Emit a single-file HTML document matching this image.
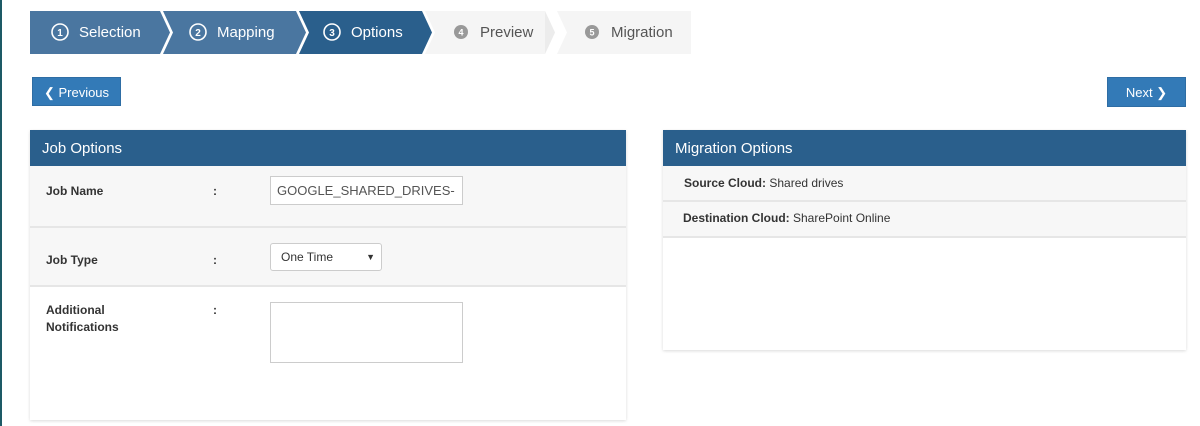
<!DOCTYPE html>
<html><head><style>
body{margin:0;width:1200px;height:426px;background:#fff;font-family:"Liberation Sans",sans-serif;position:relative;overflow:hidden}
.edge{position:absolute;left:0;top:0;width:2px;height:426px;background:#1d5a66}
.abs{position:absolute}
.btn{position:absolute;background:#337ab7;border:1px solid #2e6da4;color:#fff;font-size:13px;line-height:29px;text-align:center;box-sizing:border-box}
.panel{position:absolute;background:#fff;box-shadow:0 1px 3px rgba(0,0,0,.15)}
.ph{background:#2a5f8c;color:#fff;font-size:15px;height:36px;line-height:38px;padding-left:12px}
.row{background:#f7f7f7;border-bottom:2px solid #e6e6e6;position:relative;font-size:12px;color:#333}
.lbl{position:absolute;left:16px;font-weight:bold;font-size:12px;color:#333;line-height:17px}
.col{position:absolute;left:183px;font-weight:bold}
.inp{position:absolute;left:240px;background:#fff;border:1px solid #ccc;box-sizing:border-box}
</style></head><body>
<div class="edge"></div>
<svg class="abs" style="left:0;top:0" width="720" height="60">
<polygon points="30,11 160,11 170,32.5 160,54 30,54" fill="#4a76a0"/>
<polygon points="163,11 296,11 306,32.5 296,54 163,54 173,32.5" fill="#4a76a0"/>
<polygon points="299,11 422,11 432,32.5 422,54 299,54 309,32.5" fill="#2a5f8c"/>
<polygon points="425,11 545,11 555,32.5 545,54 425,54 435,32.5" fill="#f5f5f5"/>
<polygon points="545,11 555,32.5 545,54" fill="#ececec"/>
<polygon points="557,11 691,11 691,54 557,54 567,32.5" fill="#f5f5f5"/>
<g fill="none" stroke="#fff" stroke-width="1.6"><circle cx="60" cy="32" r="8"/><circle cx="198" cy="32" r="8"/><circle cx="332" cy="32" r="8"/></g>
<circle cx="461" cy="32" r="7" fill="#999"/><circle cx="592" cy="32" r="7" fill="#999"/>
<g font-family="Liberation Sans" font-size="10" font-weight="bold" text-anchor="middle"><text x="60" y="36" fill="#fff">1</text><text x="198" y="36" fill="#fff">2</text><text x="332" y="36" fill="#fff">3</text><text x="461" y="35.5" fill="#fff" font-size="9">4</text><text x="592" y="35.5" fill="#fff" font-size="9">5</text></g>
<g font-family="Liberation Sans" font-size="15"><text x="79" y="37" fill="#fff">Selection</text><text x="217" y="37" fill="#fff">Mapping</text><text x="351" y="37" fill="#fff">Options</text><text x="480" y="37" fill="#555">Preview</text><text x="611" y="37" fill="#555">Migration</text></g>
</svg>
<div class="btn" style="left:32px;top:77px;width:89px;height:29px">&#x276E; Previous</div>
<div class="btn" style="left:1107px;top:77px;width:79px;height:30px">Next &#x276F;</div>

<div class="panel" style="left:30px;top:130px;width:596px;height:290px">
<div class="ph">Job Options</div>
<div class="row" style="height:60px"><div class="lbl" style="top:17px">Job Name</div><div class="lbl col" style="top:17px">:</div><div class="inp" style="top:10px;width:193px;height:29px;color:#555;font-size:13px;line-height:27px;padding-left:6px;overflow:hidden;white-space:nowrap">GOOGLE_SHARED_DRIVES-</div></div>
<div class="row" style="height:57px"><div class="lbl" style="top:24px">Job Type</div><div class="lbl col" style="top:24px">:</div><div class="inp" style="top:15px;width:112px;height:28px;border-radius:3px;font-size:12px;line-height:26px;padding-left:10px;color:#333">One Time<span style="position:absolute;right:6px;font-size:9px">&#9660;</span></div></div>
<div style="position:relative"><div class="lbl" style="top:15px">Additional<br>Notifications</div><div class="lbl col" style="top:15px">:</div><div class="inp" style="top:15px;width:193px;height:61px"></div></div>
</div>

<div class="panel" style="left:663px;top:130px;width:523px;height:220px">
<div class="ph">Migration Options</div>
<div class="row" style="height:34px;line-height:34px;padding-left:21px;font-size:12px"><b>Source Cloud:</b> Shared drives</div>
<div class="row" style="height:34px;line-height:32px;padding-left:20px;font-size:12px"><b>Destination Cloud:</b> SharePoint Online</div>
</div>
</body></html>
